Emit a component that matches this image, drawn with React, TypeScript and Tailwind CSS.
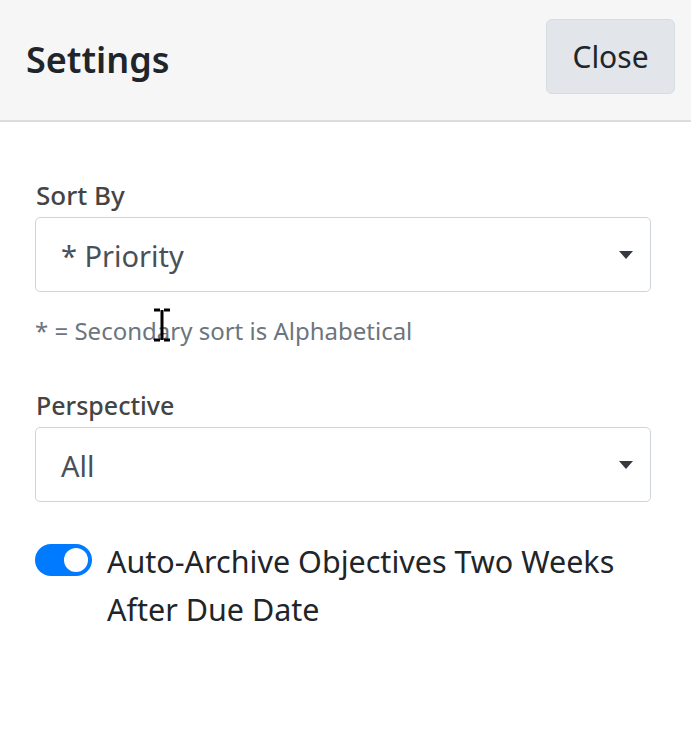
import React from 'react';

const font = { fontFamily: '"Noto Sans", "Open Sans", sans-serif' };

function Caret() {
  return (
    <svg className="absolute right-[17px] top-1/2 -translate-y-1/2" width="14" height="8" viewBox="0 0 14 8">
      <path d="M0 0h14L7 8z" fill="#343a40" />
    </svg>
  );
}

function SelectBox({ value }: { value: string }) {
  return (
    <div className="relative flex h-[75px] w-full items-center rounded-[5px] border-[1.5px] border-[#ced4da] bg-white pl-[25px] pt-[3px] text-[29px] text-[#495057]">
      {value}
      <Caret />
    </div>
  );
}

export default function App() {
  return (
    <div className="relative h-[750px] w-[691px] bg-white" style={font}>
      {/* Header */}
      <div className="flex h-[122px] items-center justify-between border-b-2 border-[#dcdcdc] bg-[#f6f6f6] pl-[26px] pr-[16px]">
        <h5 className="text-[36px] font-semibold text-[#212529]">Settings</h5>
        <button className="mb-[8px] h-[75px] w-[129px] rounded-[6px] border-[1.5px] border-[#d6dce2] bg-[#e2e6ea] text-[30px] text-[#212529]">
          Close
        </button>
      </div>

      {/* Body */}
      <div className="pl-[35px] pr-[40px] pt-[55px]">
        <label className="block pl-[1px] text-[26px] font-medium leading-[36px] text-[#444]">Sort By</label>
        <div className="mt-[4px]">
          <SelectBox value="* Priority" />
        </div>
        <p className="mt-[21px] text-[24px] leading-[36px] text-[#6c757d]">* = Secondary sort is Alphabetical</p>

        <label className="mt-[38px] block pl-[1px] text-[25px] font-medium leading-[36px] text-[#444]">Perspective</label>
        <div className="mt-[4px]">
          <SelectBox value="All" />
        </div>

        <div className="mt-[35px] flex items-start gap-[15px]">
          <div className="mt-[7px] flex h-[32px] w-[57px] shrink-0 items-center justify-end rounded-full bg-[#007bff] pr-[4px]">
            <div className="h-[24px] w-[24px] rounded-full bg-white" />
          </div>
          <span className="text-[30.5px] leading-[48px] text-[#212529]">
            Auto-Archive Objectives Two Weeks
            <br />
            After Due Date
          </span>
        </div>
      </div>

      {/* mouse cursor */}
      <svg className="absolute left-[152px] top-[308px]" width="20" height="34" viewBox="0 0 20 34">
        <path d="M2 2h6M12 2h6M10 2v30M2 32h6M12 32h6" stroke="#000" strokeWidth="3" fill="none" />
      </svg>
    </div>
  );
}
